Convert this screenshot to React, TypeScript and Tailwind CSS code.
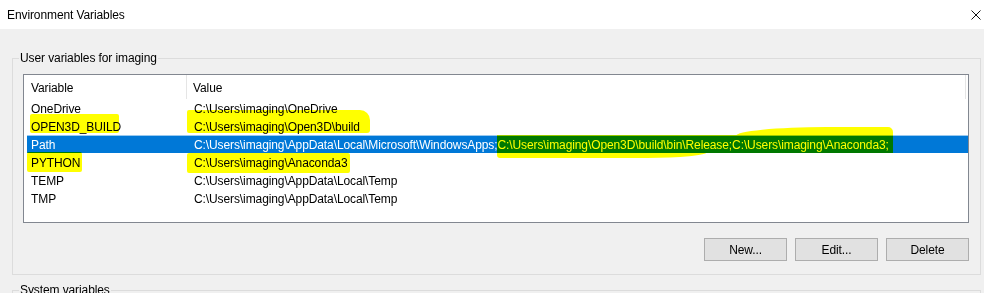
import React from 'react';

const rows = [
  { name: 'OneDrive', value: 'C:\\Users\\imaging\\OneDrive' },
  { name: 'OPEN3D_BUILD', value: 'C:\\Users\\imaging\\Open3D\\build' },
  {
    name: 'Path',
    value:
      'C:\\Users\\imaging\\AppData\\Local\\Microsoft\\WindowsApps;C:\\Users\\imaging\\Open3D\\build\\bin\\Release;C:\\Users\\imaging\\Anaconda3;',
    selected: true,
  },
  { name: 'PYTHON', value: 'C:\\Users\\imaging\\Anaconda3' },
  { name: 'TEMP', value: 'C:\\Users\\imaging\\AppData\\Local\\Temp' },
  { name: 'TMP', value: 'C:\\Users\\imaging\\AppData\\Local\\Temp' },
];

const App: React.FC = () => {
  return (
    <div
      className="w-[984px] h-[293px] overflow-hidden bg-[#f0f0f0] text-[12px] leading-[16px] tracking-[-0.1px] text-black"
      style={{ fontFamily: '"Liberation Sans", Arial, sans-serif' }}
    >
      {/* Title bar */}
      <div className="h-[29px] bg-white flex items-center justify-between pl-[7px] pr-[2px]">
        <span>Environment Variables</span>
        <svg width="10" height="10" viewBox="0 0 10 10" className="mr-[1px]">
          <path d="M0.5 0.5 L9.5 9.5 M9.5 0.5 L0.5 9.5" stroke="#111" strokeWidth="1" fill="none" />
        </svg>
      </div>

      <div className="pl-[12px]">
        {/* User variables */}
        <fieldset className="mt-[21px] w-[969px] border border-[#dcdcdc] pl-[10px] pr-[11px] pt-[8px] pb-[13px]">
          <legend className="ml-[-4px] px-[1px]">User variables for imaging</legend>

          <div className="relative h-[149px] bg-white border border-[#828790] overflow-hidden">
            {/* header */}
            <div className="flex h-[24px]">
              <div className="w-[163px] flex items-center pt-[2px] pl-[7px] border-r border-[#e5e5e5]">Variable</div>
              <div className="w-[779px] flex items-center pt-[2px] pl-[6px] border-r border-[#e5e5e5]">Value</div>
            </div>

            {/* rows */}
            {rows.map((r) => (
              <div
                key={r.name}
                className={
                  r.selected
                    ? 'ml-[3px] h-[18px] flex items-center pt-[1px] whitespace-nowrap bg-[#0078d7] text-white border-t border-[#99c9ef]'
                    : 'ml-[3px] h-[18px] flex items-center pt-[2px] whitespace-nowrap'
                }
              >
                <div className="w-[160px] pl-[4px] shrink-0">{r.name}</div>
                <div className="pl-[7px] overflow-hidden">{r.value}</div>
              </div>
            ))}

            {/* marker annotations */}
            <div className="absolute left-[6px] top-[39px] w-[89px] h-[19px] bg-[#ffff00] mix-blend-multiply rounded-[2px]" />
            <div className="absolute left-[163px] top-[35px] w-[183px] h-[23px] bg-[#ffff00] mix-blend-multiply rounded-tr-[10px] rounded-br-[3px] rounded-l-[2px]" />
            <div className="absolute left-[473px] top-[60px] w-[396px] h-[18px] bg-[#ffff00] mix-blend-multiply" />
            <div className="absolute left-[712px] top-[52px] w-[157px] h-[9px] bg-[#ffff00] mix-blend-multiply rounded-tl-[90px_9px] rounded-tr-[5px]" />
            <div className="absolute left-[473px] top-[77px] w-[210px] h-[6px] bg-[#ffff00] mix-blend-multiply rounded-br-[60px_6px] rounded-bl-[3px]" />
            <div className="absolute left-[3px] top-[77px] w-[55px] h-[20px] bg-[#ffff00] mix-blend-multiply rounded-[2px]" />
            <div className="absolute left-[163px] top-[78px] w-[163px] h-[20px] bg-[#ffff00] mix-blend-multiply rounded-[2px]" />
          </div>

          <div className="mt-[15px] flex justify-end gap-[8px]">
            {['New...', 'Edit...', 'Delete'].map((b) => (
              <button
                key={b}
                className="w-[83px] h-[23px] bg-[#e1e1e1] border border-[#adadad] flex items-center justify-center"
              >
                {b}
              </button>
            ))}
          </div>
        </fieldset>

        {/* System variables */}
        <fieldset className="mt-[7px] w-[969px] h-[60px] border border-[#dcdcdc] pl-[10px] pr-[11px]">
          <legend className="ml-[-4px] px-[1px]">System variables</legend>
        </fieldset>
      </div>
    </div>
  );
};

export default App;
